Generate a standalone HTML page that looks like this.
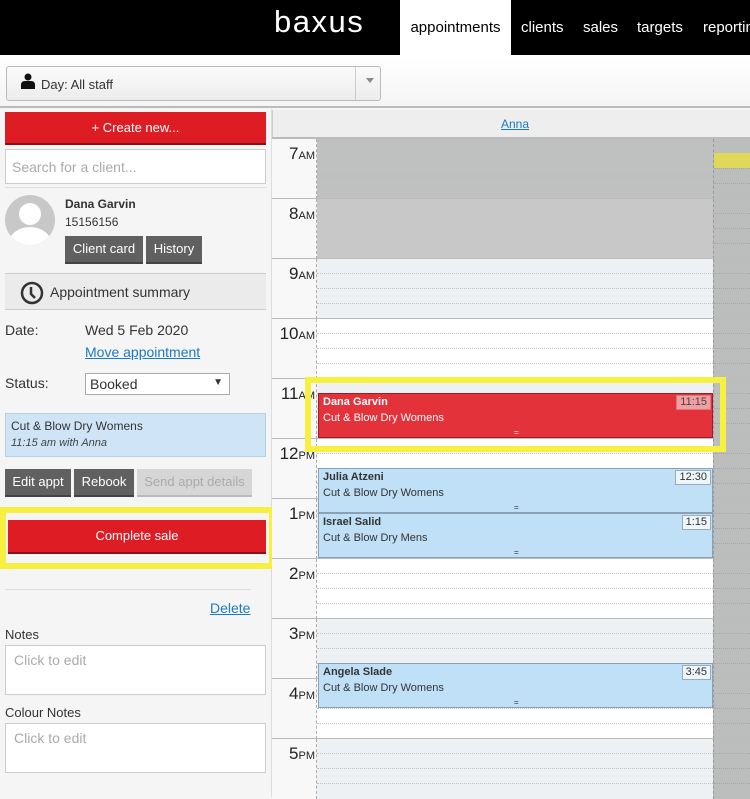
<!DOCTYPE html>
<html><head><meta charset="utf-8"><style>
*{box-sizing:border-box;margin:0;padding:0}
body{width:750px;height:797px;overflow:hidden;position:relative;font-family:"Liberation Sans",Arial,sans-serif;background:#f5f5f5;color:#333}
.a{position:absolute}
.hdr{left:0;top:0;width:750px;height:55px;background:#000}
.tab{top:0;height:55px;color:#fff;font-size:15px;line-height:56px}
.btn{position:absolute;background:#606060;color:#fff;font-size:13px;text-align:center;line-height:26px;border-bottom:2px solid #444}
.red{position:absolute;background:#dd1c24;color:#fff;font-size:13px;text-align:center;border-bottom:2px solid #8a1014}
.ta{position:absolute;background:#fff;border:1px solid #ccc;color:#aaa;font-size:14px;padding:6px 8px}
.lbl{position:absolute;font-size:14px;color:#333}
.hr{position:absolute;left:272px;width:478px;height:60px;border-top:1px solid #bbb}
.hr .t{position:absolute;left:0;top:0;width:45px;height:60px;background:#f8f8f8;border-right:1px dashed #aaa;text-align:right;padding-right:1px;font-size:17px;color:#222;padding-top:5px}
.hr .t small{font-size:11px}
.hr .c{position:absolute;left:45px;top:0;width:396px;height:60px}
.hr .g{position:absolute;left:441px;top:0;width:37px;height:60px;background:#bcbebe;border-left:1px dashed #999}
.d{position:absolute;left:0;right:0;height:0;border-top:1px dotted #c4c4c4}
.g .d{border-top-color:#a8a8a8}
.ev{position:absolute;left:318px;width:395px;height:45px;background:#bfe0f6;border:1px solid #8aa0b4;font-size:11px;padding:2px 4px;color:#333}
.ev b{display:block;font-size:11px;margin-bottom:4px}
.ev .tm{position:absolute;right:1px;top:1px;background:#eef6fc;border:1px solid #9ab;padding:0 3px;font-size:11px;line-height:13px}
.ev .h{position:absolute;left:195px;bottom:0;font-size:8px;line-height:8px}
</style></head><body>
<div class="a hdr"></div>
<div class="a" style="left:274px;top:4px;color:#fff;font-size:31px;letter-spacing:1.5px">baxus</div>
<div class="a tab" style="left:400px;width:111px;background:#fff;color:#000;text-align:center">appointments</div>
<div class="a tab" style="left:521px">clients</div>
<div class="a tab" style="left:583px">sales</div>
<div class="a tab" style="left:637px">targets</div>
<div class="a tab" style="left:703px">reporting</div>

<div class="a" style="left:0;top:55px;width:750px;height:53px;background:linear-gradient(#fff,#f4f4f4);border-bottom:2px solid #bbb"></div>
<div class="a" style="left:6px;top:66px;width:375px;height:35px;background:linear-gradient(#fbfbfb,#ececec);border:1px solid #bbb;border-radius:3px"></div>
<div class="a" style="left:355px;top:67px;width:1px;height:33px;background:#ccc"></div>
<div class="a" style="left:366px;top:78px;width:0;height:0;border-left:4px solid transparent;border-right:4px solid transparent;border-top:5px solid #888"></div>
<svg class="a" style="left:20px;top:72px" width="16" height="18" viewBox="0 0 16 18"><circle cx="8" cy="5" r="3.5" fill="#111"/><path d="M1 17 V13 Q1 9 5 9 H11 Q15 9 15 13 V17Z" fill="#111"/></svg>
<div class="a" style="left:41px;top:77px;font-size:13px;color:#333">Day: All staff</div>

<div class="a" style="left:0;top:109px;width:272px;height:688px;background:#f5f5f5;border-right:1px solid #ddd"></div>
<div class="red" style="left:5px;top:112px;width:261px;height:33px;line-height:31px">+ Create new...</div>
<div class="ta" style="left:5px;top:149px;width:261px;height:35px;font-size:14px;padding:9px 6px">Search for a client...</div>
<div class="a" style="left:5px;top:187px;width:261px;height:1px;background:#ddd"></div>
<svg class="a" style="left:5px;top:195px" width="50" height="50" viewBox="0 0 50 50"><defs><clipPath id="cp"><circle cx="25" cy="25" r="25"/></clipPath></defs><circle cx="25" cy="25" r="25" fill="#c8c8c8"/><g clip-path="url(#cp)" fill="#fff"><circle cx="25" cy="19" r="11"/><ellipse cx="25" cy="50" rx="22" ry="18"/></g></svg>
<div class="a" style="left:65px;top:197px;font-size:12px;font-weight:bold">Dana Garvin</div>
<div class="a" style="left:65px;top:215px;font-size:12px">15156156</div>
<div class="btn" style="left:65px;top:236px;width:78px;height:28px">Client card</div>
<div class="btn" style="left:146px;top:236px;width:56px;height:28px">History</div>
<div class="a" style="left:5px;top:273px;width:261px;height:37px;background:#ebebeb;border-top:1px solid #ccc;border-bottom:1px solid #ccc"></div>
<svg class="a" style="left:20px;top:281px" width="24" height="24" viewBox="0 0 24 24"><circle cx="12" cy="12" r="10" fill="none" stroke="#333" stroke-width="2.5"/><path d="M11 6 V13 L15 17" fill="none" stroke="#333" stroke-width="2.5"/></svg>
<div class="a" style="left:50px;top:284px;font-size:14px">Appointment summary</div>
<div class="lbl" style="left:5px;top:322px">Date:</div>
<div class="lbl" style="left:85px;top:322px">Wed 5 Feb 2020</div>
<div class="lbl" style="left:85px;top:344px;color:#1a7ac4;text-decoration:underline">Move appointment</div>
<div class="lbl" style="left:5px;top:375px">Status:</div>
<div class="a" style="left:85px;top:373px;width:145px;height:22px;background:#fff;border:1px solid #aaa;font-size:14px;padding:2px 4px">Booked<span style="position:absolute;right:6px;top:3px;font-size:10px">▼</span></div>
<div class="a" style="left:5px;top:413px;width:261px;height:44px;background:#cfe5f7;border:1px solid #b8cfdf;padding:5px;font-size:12px">Cut &amp; Blow Dry Womens<div style="font-style:italic;font-size:11px;margin-top:4px;color:#444">11:15 am with Anna</div></div>
<div class="btn" style="left:5px;top:469px;width:66px;height:28px">Edit appt</div>
<div class="btn" style="left:74px;top:469px;width:60px;height:28px">Rebook</div>
<div class="btn" style="left:137px;top:469px;width:115px;height:28px;background:#d6d6d6;color:#aaa;border-bottom-color:#bbb">Send appt details</div>
<div class="a" style="left:0;top:507px;width:275px;height:62px;border:6px solid #f8f040"></div>
<div class="red" style="left:8px;top:520px;width:258px;height:34px;line-height:32px">Complete sale</div>
<div class="a" style="left:5px;top:589px;width:246px;height:1px;background:#ddd"></div>
<div class="lbl" style="left:210px;top:600px;color:#1a7ac4;text-decoration:underline">Delete</div>
<div class="lbl" style="left:5px;top:627px;font-size:13px">Notes</div>
<div class="ta" style="left:5px;top:645px;width:261px;height:50px">Click to edit</div>
<div class="lbl" style="left:5px;top:705px;font-size:13px">Colour Notes</div>
<div class="ta" style="left:5px;top:723px;width:261px;height:50px">Click to edit</div>

<div class="a" style="left:272px;top:110px;width:478px;height:28px;background:#eee;border-bottom:1px solid #bbb;border-left:1px solid #ccc"></div>
<div class="a" style="left:501px;top:117px;font-size:12px;color:#1a7ac4;text-decoration:underline">Anna</div>

<div class="hr" style="top:138px"><div class="t">7<small>AM</small></div><div class="c" style="background:#bfc1c1"><div class="d" style="top:14px"></div><div class="d" style="top:29px"></div><div class="d" style="top:44px"></div></div><div class="g"><div class="d" style="top:14px"></div><div class="d" style="top:29px"></div><div class="d" style="top:44px"></div></div></div>
<div class="hr" style="top:198px"><div class="t">8<small>AM</small></div><div class="c" style="background:#c8c8c8"><div class="d" style="top:14px"></div><div class="d" style="top:29px"></div><div class="d" style="top:44px"></div></div><div class="g"><div class="d" style="top:14px"></div><div class="d" style="top:29px"></div><div class="d" style="top:44px"></div></div></div>
<div class="hr" style="top:258px"><div class="t">9<small>AM</small></div><div class="c" style="background:#edf1f4"><div class="d" style="top:14px"></div><div class="d" style="top:29px"></div><div class="d" style="top:44px"></div></div><div class="g"><div class="d" style="top:14px"></div><div class="d" style="top:29px"></div><div class="d" style="top:44px"></div></div></div>
<div class="hr" style="top:318px"><div class="t">10<small>AM</small></div><div class="c" style="background:#fff"><div class="d" style="top:14px"></div><div class="d" style="top:29px"></div><div class="d" style="top:44px"></div></div><div class="g"><div class="d" style="top:14px"></div><div class="d" style="top:29px"></div><div class="d" style="top:44px"></div></div></div>
<div class="hr" style="top:378px"><div class="t">11<small>AM</small></div><div class="c" style="background:#edf1f4"><div class="d" style="top:14px"></div><div class="d" style="top:29px"></div><div class="d" style="top:44px"></div></div><div class="g"><div class="d" style="top:14px"></div><div class="d" style="top:29px"></div><div class="d" style="top:44px"></div></div></div>
<div class="hr" style="top:438px"><div class="t">12<small>PM</small></div><div class="c" style="background:#fff"><div class="d" style="top:14px"></div><div class="d" style="top:29px"></div><div class="d" style="top:44px"></div></div><div class="g"><div class="d" style="top:14px"></div><div class="d" style="top:29px"></div><div class="d" style="top:44px"></div></div></div>
<div class="hr" style="top:498px"><div class="t">1<small>PM</small></div><div class="c" style="background:#edf1f4"><div class="d" style="top:14px"></div><div class="d" style="top:29px"></div><div class="d" style="top:44px"></div></div><div class="g"><div class="d" style="top:14px"></div><div class="d" style="top:29px"></div><div class="d" style="top:44px"></div></div></div>
<div class="hr" style="top:558px"><div class="t">2<small>PM</small></div><div class="c" style="background:#fff"><div class="d" style="top:14px"></div><div class="d" style="top:29px"></div><div class="d" style="top:44px"></div></div><div class="g"><div class="d" style="top:14px"></div><div class="d" style="top:29px"></div><div class="d" style="top:44px"></div></div></div>
<div class="hr" style="top:618px"><div class="t">3<small>PM</small></div><div class="c" style="background:#edf1f4"><div class="d" style="top:14px"></div><div class="d" style="top:29px"></div><div class="d" style="top:44px"></div></div><div class="g"><div class="d" style="top:14px"></div><div class="d" style="top:29px"></div><div class="d" style="top:44px"></div></div></div>
<div class="hr" style="top:678px"><div class="t">4<small>PM</small></div><div class="c" style="background:#fff"><div class="d" style="top:14px"></div><div class="d" style="top:29px"></div><div class="d" style="top:44px"></div></div><div class="g"><div class="d" style="top:14px"></div><div class="d" style="top:29px"></div><div class="d" style="top:44px"></div></div></div>
<div class="hr" style="top:738px"><div class="t">5<small>PM</small></div><div class="c" style="background:#edf1f4"><div class="d" style="top:14px"></div><div class="d" style="top:29px"></div><div class="d" style="top:44px"></div></div><div class="g"><div class="d" style="top:14px"></div><div class="d" style="top:29px"></div><div class="d" style="top:44px"></div></div></div>
<div class="a" style="left:714px;top:153px;width:36px;height:15px;background:#e0d85a"></div>

<div class="ev" style="top:393px;background:#e3323a;border-color:#a01c22;color:#fff"><b>Dana Garvin</b>Cut &amp; Blow Dry Womens<span class="tm" style="background:#f0a0a4;border-color:#d77;color:#444">11:15</span><span class="h" style="color:#fff">=</span></div>
<div class="a" style="left:305px;top:377px;width:421px;height:75px;border:6px solid #f8f040"></div>
<div class="ev" style="top:468px"><b>Julia Atzeni</b>Cut &amp; Blow Dry Womens<span class="tm">12:30</span><span class="h">=</span></div>
<div class="ev" style="top:513px"><b>Israel Salid</b>Cut &amp; Blow Dry Mens<span class="tm">1:15</span><span class="h">=</span></div>
<div class="ev" style="top:663px"><b>Angela Slade</b>Cut &amp; Blow Dry Womens<span class="tm">3:45</span><span class="h">=</span></div>
</body></html>
